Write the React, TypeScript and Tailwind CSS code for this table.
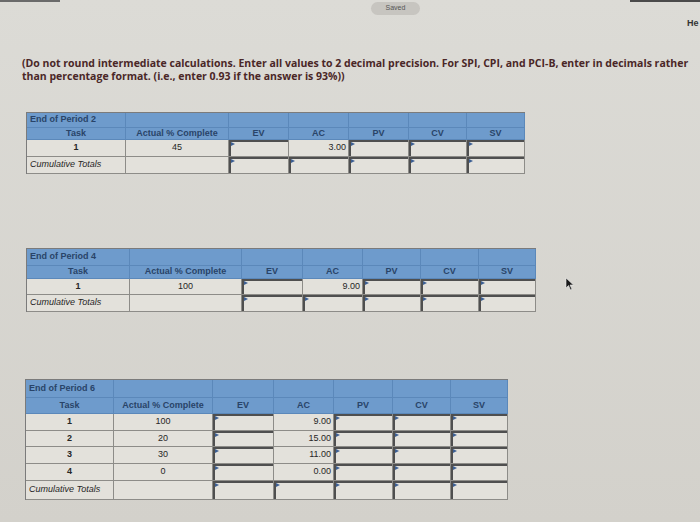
import React from 'react';

type Row = { task: string; pct: string; ac: string };

interface PeriodTableProps {
  period: number;
  colsClass: string;
  rowsClass: string;
  rows: Row[];
  className?: string;
}

const headerCell = 'bg-[#6e9bcc] border-r border-b border-[#5b88ba] text-[#294468] font-bold';
const plainCell = 'bg-[#e3e1db] border-r border-b border-[#8d8c88] text-[#262626]';

const InputCell = () => (
  <div className="relative bg-[#e3e1db] border-r border-b border-[#8d8c88]">
    <div className="h-full w-full border-t-2 border-l-2 border-[#4f4f4f]" />
    <span className="absolute left-[2px] top-[2px] h-0 w-0 border-y-[2px] border-l-[4px] border-y-transparent border-l-[#3d5f93]" />
  </div>
);

const PeriodTable: React.FC<PeriodTableProps> = ({ period, colsClass, rowsClass, rows, className }) => {
  const headers = ['Task', 'Actual % Complete', 'EV', 'AC', 'PV', 'CV', 'SV'];
  return (
    <div
      className={`grid ${colsClass} ${rowsClass} border-l border-t border-[#7b7b7b] text-[9px] leading-none font-['Liberation_Sans',Arial,sans-serif] ${className ?? ''}`}
    >
      <div className={`${headerCell} flex items-center pl-[3px]`}>End of Period {period}</div>
      {[0, 1, 2, 3, 4, 5].map((i) => (
        <div key={i} className={headerCell} />
      ))}

      {headers.map((h) => (
        <div key={h} className={`${headerCell} flex items-center justify-center`}>
          {h}
        </div>
      ))}

      {rows.map((r) => (
        <React.Fragment key={r.task}>
          <div className={`${plainCell} flex items-center justify-center font-bold`}>{r.task}</div>
          <div className={`${plainCell} flex items-center justify-center`}>{r.pct}</div>
          <InputCell />
          <div className={`${plainCell} flex items-center justify-end pr-[2px]`}>{r.ac}</div>
          <InputCell />
          <InputCell />
          <InputCell />
        </React.Fragment>
      ))}

      <div className={`${plainCell} flex items-center pl-[3px] italic`}>Cumulative Totals</div>
      <div className={plainCell} />
      <InputCell />
      <InputCell />
      <InputCell />
      <InputCell />
      <InputCell />
    </div>
  );
};

export default function App() {
  return (
    <div className="relative w-[700px] h-[522px] overflow-hidden bg-[#d7d5cf] bg-gradient-to-b from-[#dcdbd6] to-[#d3d1cb]">
      {/* top bar */}
      <div className="h-[2px] flex justify-between">
        <div className="w-[60px] bg-[#6a6a6a]" />
        <div className="w-[70px] bg-[#4a4a4a]" />
      </div>
      <div className="flex pl-[371px]">
        <div className="w-[49px] h-[13px] rounded-full bg-[#c7c5c0] flex items-center justify-center text-[7px] text-[#555] font-['Liberation_Sans',Arial,sans-serif]">
          Saved
        </div>
      </div>
      <div className="pl-[687px] mt-[2px] whitespace-nowrap text-[9px] font-bold text-[#333] font-['Liberation_Sans',Arial,sans-serif]">
        He
      </div>

      {/* instructions */}
      <p className="mt-[26px] pl-[22px] whitespace-nowrap text-[10.5px] leading-[13px] font-bold text-[#4a2727] font-['Open_Sans','Lato',sans-serif]">
        (Do not round intermediate calculations. Enter all values to 2 decimal precision. For SPI, CPI, and PCI-B, enter in decimals rather
        <br />
        than percentage format. (i.e., enter 0.93 if the answer is 93%))
      </p>

      <PeriodTable
        period={2}
        className="ml-[26px] mt-[29px] w-max"
        colsClass="grid-cols-[99px_103px_60px_60px_60px_58px_58px]"
        rowsClass="grid-rows-[15px_12px_17px_17px]"
        rows={[{ task: '1', pct: '45', ac: '3.00' }]}
      />

      <PeriodTable
        period={4}
        className="ml-[26px] mt-[74px] w-max"
        colsClass="grid-cols-[103px_112px_61px_60px_58px_58px_57px]"
        rowsClass="grid-rows-[17px_13px_16px_17px]"
        rows={[{ task: '1', pct: '100', ac: '9.00' }]}
      />

      <PeriodTable
        period={6}
        className="ml-[25px] mt-[67px] w-max"
        colsClass="grid-cols-[88px_99px_61px_60px_59px_58px_57px]"
        rowsClass="grid-rows-[18px_16px_17px_16px_17px_17px_19px]"
        rows={[
          { task: '1', pct: '100', ac: '9.00' },
          { task: '2', pct: '20', ac: '15.00' },
          { task: '3', pct: '30', ac: '11.00' },
          { task: '4', pct: '0', ac: '0.00' },
        ]}
      />

      {/* mouse cursor */}
      <svg className="absolute left-[565px] top-[277px]" width="10" height="14" viewBox="0 0 10 14">
        <path d="M1 1 L1 11 L3.5 8.5 L5.5 13 L7 12.3 L5 8 L8.5 8 Z" fill="#1a1a1a" stroke="#eee" strokeWidth="0.6" />
      </svg>
    </div>
  );
}
